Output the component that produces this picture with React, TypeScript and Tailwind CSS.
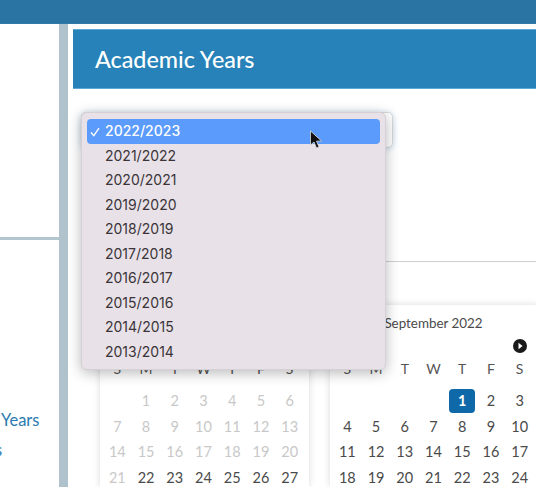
const years = [
  "2022/2023",
  "2021/2022",
  "2020/2021",
  "2019/2020",
  "2018/2019",
  "2017/2018",
  "2016/2017",
  "2015/2016",
  "2014/2015",
  "2013/2014",
];

const dayNames = ["S", "M", "T", "W", "T", "F", "S"];

// Days before the cutoff are greyed out (not selectable)
function MonthCard({
  title,
  blanks,
  total,
  disabledUntil,
  selected,
  showNext,
}: {
  title: string;
  blanks: number;
  total: number;
  disabledUntil: number;
  selected?: number;
  showNext?: boolean;
}) {
  const days = Array.from({ length: total }, (_, i) => i + 1);
  return (
    <div className="h-[182px] w-[209px] shrink-0 rounded-t-[3px] bg-white pl-[3px] pr-[5px] shadow-[0_0_7px_rgba(0,0,0,0.15)]">
      <div className="h-[32px] pt-[8px] text-center text-[13.4px] leading-[20px] text-[#4a4a4a]">{title}</div>
      <div className="flex h-[22px] items-start justify-end pr-[7px] pt-[2px]">
        {showNext && (
          <svg width="14" height="14" viewBox="0 0 14 14">
            <circle cx="7" cy="7" r="7" fill="#1a1a1a" />
            <path d="M5.5 3.8 L9.6 7 L5.5 10.2 Z" fill="#fff" />
          </svg>
        )}
      </div>
      <div className="grid grid-cols-7 text-center text-[14px] text-[#555]">
        {dayNames.map((d, i) => (
          <div key={i} className="h-[20px] leading-[20px]">{d}</div>
        ))}
      </div>
      <div className="mt-[9px] grid grid-cols-7 text-center text-[14.5px]">
        {Array.from({ length: blanks }).map((_, i) => (
          <div key={i} className="h-[25.6px]" />
        ))}
        {days.map((d) => (
          <div key={d} className="flex h-[25.6px] items-center justify-center">
            {d === selected ? (
              <span className="flex h-[24px] w-[26px] items-center justify-center rounded-[4px] bg-[#0f69a8] font-bold text-white">{d}</span>
            ) : (
              <span className={d < disabledUntil ? "text-[#c8c8c8]" : "text-[#4a4a4a]"}>{d}</span>
            )}
          </div>
        ))}
      </div>
    </div>
  );
}

export default function App() {
  return (
    <div className="flex h-[487px] w-[536px] flex-col overflow-hidden bg-white font-['Lato',sans-serif]">
      <div className="h-[24px] shrink-0 border-b border-[#2f7aa6] bg-[#2a74a3]" />
      <div className="flex min-h-0 flex-1">
        {/* sidebar, cut off on its left side */}
        <div className="w-[59px] shrink-0 overflow-hidden">
          <div className="h-[213px]" />
          <div className="h-[3px] bg-[#b3c5cf]" />
          <div className="h-[170px]" />
          <div className="ml-[-73px] whitespace-nowrap text-[16.5px] leading-[20px] text-[#2a7ab0]">Academic Years</div>
          <div className="ml-[-41px] mt-[10px] whitespace-nowrap text-[16.5px] leading-[20px] text-[#2a7ab0]">Terms</div>
        </div>
        <div className="w-[9px] shrink-0 bg-[#b0c3cd]" />

        {/* main content */}
        <div className="relative min-w-0 flex-1 overflow-hidden pl-[5px] pt-[5px]">
          <div className="flex h-[60px] items-center border-y border-[#5aa9d6] bg-[#2682b8] pl-[22px] text-[23.3px] font-medium text-white">
            Academic Years
          </div>
          <div className="ml-[8px] mt-[23px] h-[36px] w-[312px] rounded-[5px] border border-[#d8d8d8] bg-white shadow-[0_1px_6px_rgba(90,150,200,0.35)]" />
          <div className="ml-[8px] mt-[113px] h-px bg-[#cfcfcf]" />
          <div className="ml-[27px] mt-[43px] flex gap-[21px]">
            <MonthCard title="August 2022" blanks={1} total={31} disabledUntil={22} />
            <MonthCard title="September 2022" blanks={4} total={30} disabledUntil={0} selected={1} showNext />
          </div>

          {/* open select menu */}
          <div className="absolute left-[13px] top-[88px] w-[305px] rounded-[6px] border border-[#d5d0d5] bg-[#e8e2e8] px-[5px] pb-[5px] pt-[6px] font-['Inter',sans-serif] text-[14px] text-[#3a3438] shadow-[0_3px_14px_rgba(0,0,0,0.28)]">
            {years.map((y, i) => (
              <div
                key={y}
                className={`relative h-[24.5px] rounded-[4px] pl-[18px] leading-[24.5px] ${i === 0 ? "bg-[#5b9bfb] font-medium text-white" : ""}`}
              >
                {i === 0 && (
                  <svg className="absolute left-[3px] top-[8px]" width="10" height="10" viewBox="0 0 10 10" fill="none">
                    <path d="M1 5.5 L3.8 8.6 L9 1.2" stroke="#fff" strokeWidth="1.4" />
                  </svg>
                )}
                {y}
              </div>
            ))}
          </div>

          {/* mouse pointer */}
          <svg className="absolute left-[241px] top-[106px]" width="14" height="20" viewBox="0 0 14 20">
            <path d="M1.5 1 L1.5 15 L5 12 L7.5 18 L10 17 L7.5 11.2 L12.5 11 Z" fill="#111" stroke="#ddd" strokeWidth="0.8" />
          </svg>
        </div>
      </div>
    </div>
  );
}
